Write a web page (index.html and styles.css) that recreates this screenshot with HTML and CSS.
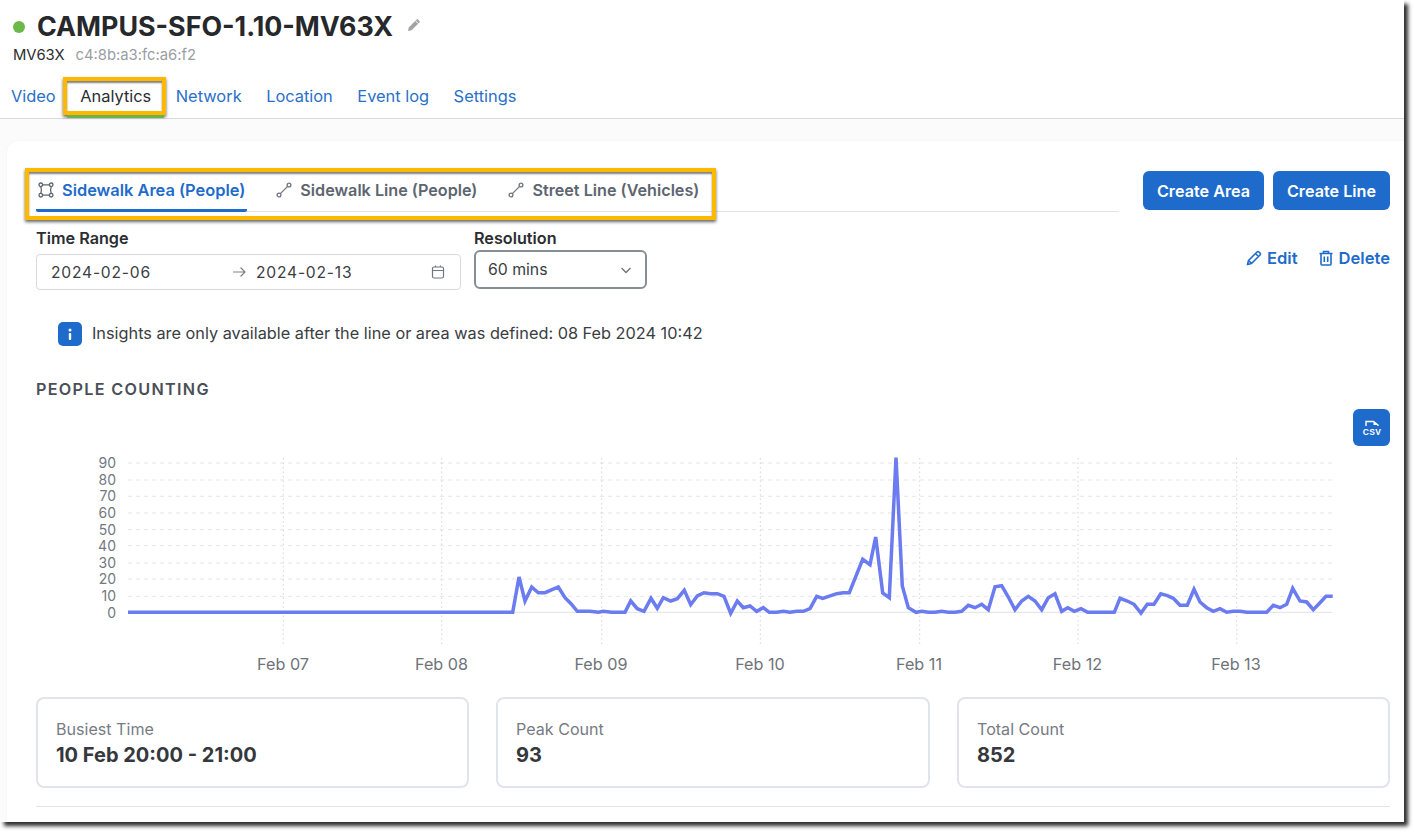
FILE: index.html
```html
<!DOCTYPE html>
<html lang="en">
<head>
  <meta charset="UTF-8">
  <title>CAMPUS-SFO-1.10-MV63X - Analytics</title>
  <link rel="stylesheet" href="styles.css">
</head>
<body>
  <div class="window">
    <!-- device header -->
    <div class="device-header">
      <div class="title-row">
        <span class="status-dot"></span>
        <h1>CAMPUS-SFO-1.10-MV63X</h1>
        <svg class="title-edit" width="16" height="16" viewBox="0 0 16 16"><path d="M2 14l.8-3.6L10.6 2.6a1 1 0 0 1 1.4 0l1.4 1.4a1 1 0 0 1 0 1.4L5.600 13.200z" fill="#a3a3a3"/><path d="M9.500 3.800l2.700 2.700" stroke="#fff" stroke-width="1"/></svg>
      </div>
      <div class="sub-row">
        <span class="model">MV63X</span>
        <span class="mac">c4:8b:a3:fc:a6:f2</span>
      </div>
      <div class="nav">
        <a class="nav-item">Video</a>
        <a class="nav-item nav-active">Analytics</a>
        <a class="nav-item">Network</a>
        <a class="nav-item">Location</a>
        <a class="nav-item">Event log</a>
        <a class="nav-item">Settings</a>
      </div>
    </div>

    <div class="card">
      <div class="tab-row">
        <div class="tabs">
          <a class="tab tab-active">
            <svg width="16" height="16" viewBox="0 0 16 16" fill="none" stroke="#5d6570" stroke-width="1.300"><circle cx="2.800" cy="2.800" r="1.800"/><circle cx="13.200" cy="2.800" r="1.800"/><circle cx="2.800" cy="13.200" r="1.800"/><circle cx="13.200" cy="13.200" r="1.800"/><path d="M4.600 2.800h6.800M4.600 13.200h6.800M2.800 4.600c.8 2.200.8 4.600 0 6.800M13.200 4.600c-.8 2.200-.8 4.600 0 6.800"/></svg>
            Sidewalk Area (People)
          </a>
          <a class="tab">
            <svg width="16" height="16" viewBox="0 0 16 16" fill="none" stroke="#6f7680" stroke-width="1.300"><circle cx="3" cy="13" r="1.900"/><circle cx="13" cy="3" r="1.900"/><path d="M4.400 11.600l7.200-7.200"/></svg>
            Sidewalk Line (People)
          </a>
          <a class="tab">
            <svg width="16" height="16" viewBox="0 0 16 16" fill="none" stroke="#6f7680" stroke-width="1.300"><circle cx="3" cy="13" r="1.900"/><circle cx="13" cy="3" r="1.900"/><path d="M4.400 11.600l7.200-7.200"/></svg>
            Street Line (Vehicles)
          </a>
          <div class="highlight-box"></div>
        </div>
        <div class="tab-actions">
          <button class="btn">Create Area</button>
          <button class="btn btn-line">Create Line</button>
        </div>
      </div>

      <div class="filter-row">
        <div class="field field-range">
          <label>Time Range</label>
          <div class="range-input">
            <span class="range-from">2024-02-06</span>
            <svg width="16" height="16" viewBox="0 0 16 16" fill="none" stroke="#7b828c" stroke-width="1.200"><path d="M2 8h12M9.500 3.500L14 8l-4.500 4.500"/></svg>
            <span class="range-to">2024-02-13</span>
            <svg class="range-cal" width="16" height="16" viewBox="0 0 16 16" fill="none" stroke="#6f7680" stroke-width="1.200"><rect x="2.500" y="3" width="11" height="11" rx="1.500"/><path d="M2.500 6.500h11M5.500 1.500V3M10.500 1.500V3"/></svg>
          </div>
        </div>
        <div class="field field-res">
          <label>Resolution</label>
          <div class="select">
            <span>60 mins</span>
            <svg width="14" height="14" viewBox="0 0 14 14" fill="none" stroke="#6f7680" stroke-width="1.400"><path d="M2.500 5l4.500 4.500L11.500 5"/></svg>
          </div>
        </div>
        <div class="row-actions">
          <a class="link-action">
            <svg width="16" height="16" viewBox="0 0 16 16" fill="none" stroke="#1f6bcb" stroke-width="1.600" stroke-linejoin="round"><path d="M1.500 14.500l1-4L11 2a1.500 1.500 0 0 1 2 0l1 1a1.500 1.500 0 0 1 0 2l-8.500 8.500zM9.500 3.500l3 3M2.500 10.500l3 3"/></svg>
            Edit
          </a>
          <a class="link-action">
            <svg width="16" height="16" viewBox="0 0 16 16" fill="none" stroke="#1f6bcb" stroke-width="1.600"><path d="M1.500 3.500h13M5.500 3.500V1.500h5v2M3 3.500V14a1 1 0 0 0 1 1h8a1 1 0 0 0 1-1V3.500M6.300 6.500v5.500M9.700 6.500v5.500"/></svg>
            Delete
          </a>
        </div>
      </div>

      <div class="notice">
        <span class="notice-icon">
          <svg width="24" height="24" viewBox="0 0 24 24"><rect width="24" height="24" rx="5" fill="#1f6bcb"/><circle cx="12" cy="8" r="1.500" fill="#fff"/><rect x="10.800" y="11" width="2.400" height="7" rx="1" fill="#fff"/></svg>
        </span>
        <span class="notice-text">Insights are only available after the line or area was defined: 08 Feb 2024 10:42</span>
      </div>

      <h2 class="section-title">PEOPLE COUNTING</h2>

      <div class="csv-row">
        <button class="csv-btn">
          <svg width="20" height="20" viewBox="0 0 20 20"><path d="M4 8V3.500h7.500L16 7v1" fill="none" stroke="#fff" stroke-width="1.400"/><path d="M11.500 3.500V7H16z" fill="#fff"/><text x="10" y="16.500" class="csv-text">CSV</text></svg>
        </button>
      </div>

      <!-- viewBox uses page coords so the chart numbers are easy to read off -->
      <svg class="chart" width="1354" height="230" viewBox="36 450 1354 230">
        <g class="grid-h">
          <path d="M128 462H1332M128 479H1332M128 495.300H1332M128 512H1332M128 528.700H1332M128 544.700H1332M128 562H1332M128 578H1332M128 595.300H1332"/>
        </g>
        <path class="axis-0" d="M128 611.300H1332"/>
        <g class="grid-v">
          <path d="M283.300 457V643M441.700 457V643M601.700 457V643M760.300 457V643M919.700 457V643M1078 457V643M1236.700 457V643"/>
        </g>
        <g class="y-labels">
          <text x="116" y="467">90</text>
          <text x="116" y="484">80</text>
          <text x="116" y="500">70</text>
          <text x="116" y="517">60</text>
          <text x="116" y="533.500">50</text>
          <text x="116" y="550">40</text>
          <text x="116" y="567">30</text>
          <text x="116" y="583">20</text>
          <text x="116" y="600">10</text>
          <text x="116" y="616.500">0</text>
        </g>
        <g class="x-labels">
          <text x="283" y="669.500">Feb 07</text>
          <text x="441.500" y="669.500">Feb 08</text>
          <text x="601" y="669.500">Feb 09</text>
          <text x="760" y="669.500">Feb 10</text>
          <text x="919" y="669.500">Feb 11</text>
          <text x="1077.500" y="669.500">Feb 12</text>
          <text x="1236" y="669.500">Feb 13</text>
        </g>
        <polyline class="series" points="128,611.300 512.700,611.300 519,576 525,600 531.700,586 538.300,591.700 545,591.700 558.300,586 565,596.700 571,602.700 577.300,610.300 590,610.300 598.300,611.300 603.300,610.300 611.700,611.300 625,611.300 630.700,600 637.300,607.700 644,610.300 651,597.300 657.300,607.300 663.300,596.700 670.700,600 677.300,597.700 684.300,589.300 690.700,603.700 697.300,595 704,591.700 710.700,592.700 717.300,592.700 724,595.300 730.700,612.300 737.300,600 743.300,606.700 750,605 756.700,610.300 763.300,606.700 769.300,611.300 776.700,611.300 783.300,610.300 790,611.300 796.700,610.300 803.300,610.300 810,607.700 816.700,595.300 822.700,597.300 836.700,592.700 843.300,591.700 849.300,591.700 862.700,558.300 870,563.700 875.700,536 882.700,592 889.300,596.700 896,456.700 902.300,585 908.300,606.700 916,611.300 921.700,610.300 928.300,611.300 935,611.300 941.700,610.300 948.300,611.300 955,611.300 961.700,610.300 968.300,604.300 975,606.700 981.700,603.300 988.300,608.700 995,585.700 1001.700,584.700 1008.300,596 1015,608.700 1021.700,600 1028.300,595.300 1035,600 1041.700,608.700 1048.300,596.700 1055,592.700 1061.700,610.300 1067.700,606.700 1074.300,610.300 1081,607.700 1087.700,611.300 1114.300,611.300 1120,597.300 1127.300,600 1134,603.300 1141,612 1147.300,603.300 1154,603.300 1160.700,592.700 1167.300,594.700 1173.300,597.300 1180,604.300 1187.300,604.300 1194,588.300 1200,601 1206.700,606.700 1213.300,610.300 1220,607.700 1226.700,611.300 1233.300,610.300 1240,610.300 1246.700,611.300 1266.700,611.300 1273.300,604.300 1280,606.700 1286.700,603.300 1292.700,587.300 1300,600 1306.700,601 1313.300,608.700 1320,601.700 1326,595.300 1332.700,595.300"/>
      </svg>

      <div class="stats">
        <div class="stat">
          <div class="stat-label">Busiest Time</div>
          <div class="stat-value">10 Feb 20:00 - 21:00</div>
        </div>
        <div class="stat">
          <div class="stat-label">Peak Count</div>
          <div class="stat-value">93</div>
        </div>
        <div class="stat">
          <div class="stat-label">Total Count</div>
          <div class="stat-value">852</div>
        </div>
      </div>
      <div class="divider"></div>
    </div>
  </div>
</body>
</html>
```

FILE: styles.css
```css
/* page frame */
html, body {
  height: 832px;
}

body {
  margin: 0;
  background-color: #fff;
  font-family: "Inter", "Liberation Sans", sans-serif;
  color: #2b2d31;
}

.window {
  width: 1404px;
  height: 822px;
  overflow: hidden;
  background-color: #fbfbfb;
  box-shadow: 4px 4px 4px #2e2e2e;
}

/* header */
.device-header {
  height: 118px;
  background-color: #fff;
  border-bottom: 1px solid #d9d9d9;
  box-sizing: content-box;
}

.title-row {
  display: flex;
  align-items: center;
  height: 27px;
  padding: 13px 0 0 13px;
}

.status-dot {
  width: 12px;
  height: 12px;
  border-radius: 50%;
  background-color: #6cb84a;
  margin-right: 12px;
}

.title-row h1 {
  margin: 0;
  font-size: 26.800px;
  line-height: 27px;
  font-weight: 700;
  color: #26282b;
}

.title-edit {
  margin: -4px 0 0 13px;
}

.sub-row {
  display: flex;
  gap: 11px;
  padding: 6px 0 0 13px;
  font-size: 14.800px;
  line-height: 18px;
}

.model {
  color: #2b2d31;
}

.mac {
  color: #9a9da3;
}

.nav {
  display: flex;
  align-items: center;
  padding: 20px 0 0 11px;
  font-size: 16.400px;
  color: #2a70c8;
}

.nav-item {
  line-height: 24px;
  margin-right: 24.500px;
}

.nav-active {
  position: relative;
  color: #2b2d31;
}

.nav-active::before {
  content: "";
  position: absolute;
  left: -17px;
  right: -15px;
  top: -7px;
  bottom: -7px;
  border: 4px solid #fdb900;
  box-shadow: 0 2px 3px rgba(0, 0, 0, .6), inset 0 2px 2px rgba(0, 0, 0, .5);
}

.nav-active::after {
  content: "";
  position: absolute;
  left: -13px;
  right: -13px;
  bottom: -10px;
  height: 3px;
  background-color: #6cb24a;
}

/* main card */
.card {
  margin: 22px 0 0 7px;
  padding: 30px 14px 0 29px;
  height: 660px;
  background-color: #fff;
  border-radius: 12px 0 0 0;
  box-shadow: 0 0 3px rgba(0, 0, 0, .04);
}

.tab-row {
  display: flex;
  justify-content: space-between;
}

.tabs {
  position: relative;
  display: flex;
  width: 1083px;
  height: 40px;
  border-bottom: 1px solid #e1e3e6;
  box-sizing: content-box;
}

.tab {
  display: flex;
  align-items: center;
  gap: 8px;
  height: 38px;
  padding: 0 2px;
  margin-right: 27px;
  font-size: 16.200px;
  font-weight: 600;
  color: #5d6570;
}

.tab-active {
  color: #1f6bcb;
  font-size: 16.400px;
  border-bottom: 3px solid #1f6bcb;
  border-radius: 0 0 2px 2px;
  height: 38px;
}

.highlight-box {
  position: absolute;
  left: -11px;
  top: -3px;
  width: 691px;
  height: 52px;
  box-sizing: border-box;
  border: 4px solid #fdb900;
  box-shadow: 0 2px 3px rgba(0, 0, 0, .6), inset 0 2px 2px rgba(0, 0, 0, .5);
}

.tab-actions {
  display: flex;
  gap: 9px;
}

.btn {
  width: 121px;
  height: 39px;
  border: none;
  border-radius: 6px;
  background-color: #1f6bcb;
  color: #fff;
  font-family: inherit;
  font-size: 16.200px;
  font-weight: 600;
}

.btn-line {
  width: 117px;
}

/* filters */
.filter-row {
  display: flex;
  margin-top: 17px;
}

.field label {
  display: block;
  font-size: 16.200px;
  font-weight: 600;
  line-height: 18px;
  color: #2b2d31;
}

.field-range {
  width: 425px;
  margin-right: 13px;
}

.range-input {
  display: flex;
  align-items: center;
  height: 36px;
  margin-top: 7px;
  padding: 0 14px;
  border: 1px solid #d6d9dd;
  border-radius: 4px;
  box-sizing: border-box;
  font-size: 15.600px;
  letter-spacing: .8px;
  color: #3a3d42;
}

.range-from {
  width: 180px;
}

.range-to {
  margin-left: 9px;
}

.range-cal {
  margin-left: auto;
}

.field-res {
  width: 173px;
}

.select {
  display: flex;
  align-items: center;
  justify-content: space-between;
  height: 39px;
  margin-top: 3px;
  padding: 0 12px;
  border: 2px solid #868e96;
  border-radius: 6px;
  box-sizing: border-box;
  font-size: 15.800px;
  color: #3a3d42;
}

.row-actions {
  display: flex;
  align-items: center;
  gap: 20px;
  margin-left: auto;
  height: 39px;
  margin-top: 9px;
}

.link-action {
  display: flex;
  align-items: center;
  gap: 5px;
  font-size: 16.600px;
  font-weight: 600;
  color: #1f6bcb;
}

/* notice */
.notice {
  display: flex;
  align-items: center;
  margin: 32px 0 0 22px;
  height: 24px;
  font-size: 16.300px;
  color: #3a3d42;
}

.notice-icon {
  display: flex;
  margin-right: 10px;
}

.notice-text {
  margin-top: -2px;
}

.section-title {
  margin: 33px 0 0;
  font-size: 16.200px;
  line-height: 20px;
  font-weight: 600;
  letter-spacing: 1.300px;
  color: #4a4f57;
}

.csv-row {
  display: flex;
  justify-content: flex-end;
  margin-top: 10px;
}

.csv-btn {
  display: flex;
  align-items: center;
  justify-content: center;
  width: 37px;
  height: 37px;
  padding: 0;
  border: none;
  border-radius: 6px;
  background-color: #1f6bcb;
}

.csv-text {
  fill: #fff;
  font-size: 8.500px;
  font-weight: 800;
  text-anchor: middle;
  letter-spacing: .3px;
}

/* chart */
.chart {
  display: block;
  margin-top: 5px;
}

.grid-h path {
  fill: none;
  stroke: #e4e5e7;
  stroke-width: 1;
  stroke-dasharray: 4 4;
}

.grid-v path {
  fill: none;
  stroke: #d4d5d8;
  stroke-width: 1;
  stroke-dasharray: 1.500 3;
}

.axis-0 {
  stroke: #e1e2e5;
  stroke-width: 1;
}

.y-labels text {
  font-size: 14px;
  fill: #74787f;
  text-anchor: end;
}

.x-labels text {
  font-size: 16.200px;
  fill: #6f737a;
  text-anchor: middle;
  transform: translateY(-1px);
}

.series {
  fill: none;
  stroke: #6b7bf0;
  stroke-width: 3.500;
  stroke-linejoin: miter;
}

/* stat cards */
.stats {
  display: grid;
  grid-template-columns: 433px 434px 433px;
  gap: 27px;
  margin-top: 16px;
}

.stat {
  height: 91px;
  padding: 20px 18px 0;
  border: 2px solid #e1e4ea;
  border-radius: 8px;
  box-sizing: border-box;
}

.stat-label {
  font-size: 16.100px;
  line-height: 20px;
  color: #777b83;
}

.stat-value {
  margin-top: 3px;
  font-size: 20px;
  line-height: 26px;
  font-weight: 700;
  color: #35383d;
}

.divider {
  margin-top: 18px;
  height: 1px;
  background-color: #e3e4e8;
}
```
